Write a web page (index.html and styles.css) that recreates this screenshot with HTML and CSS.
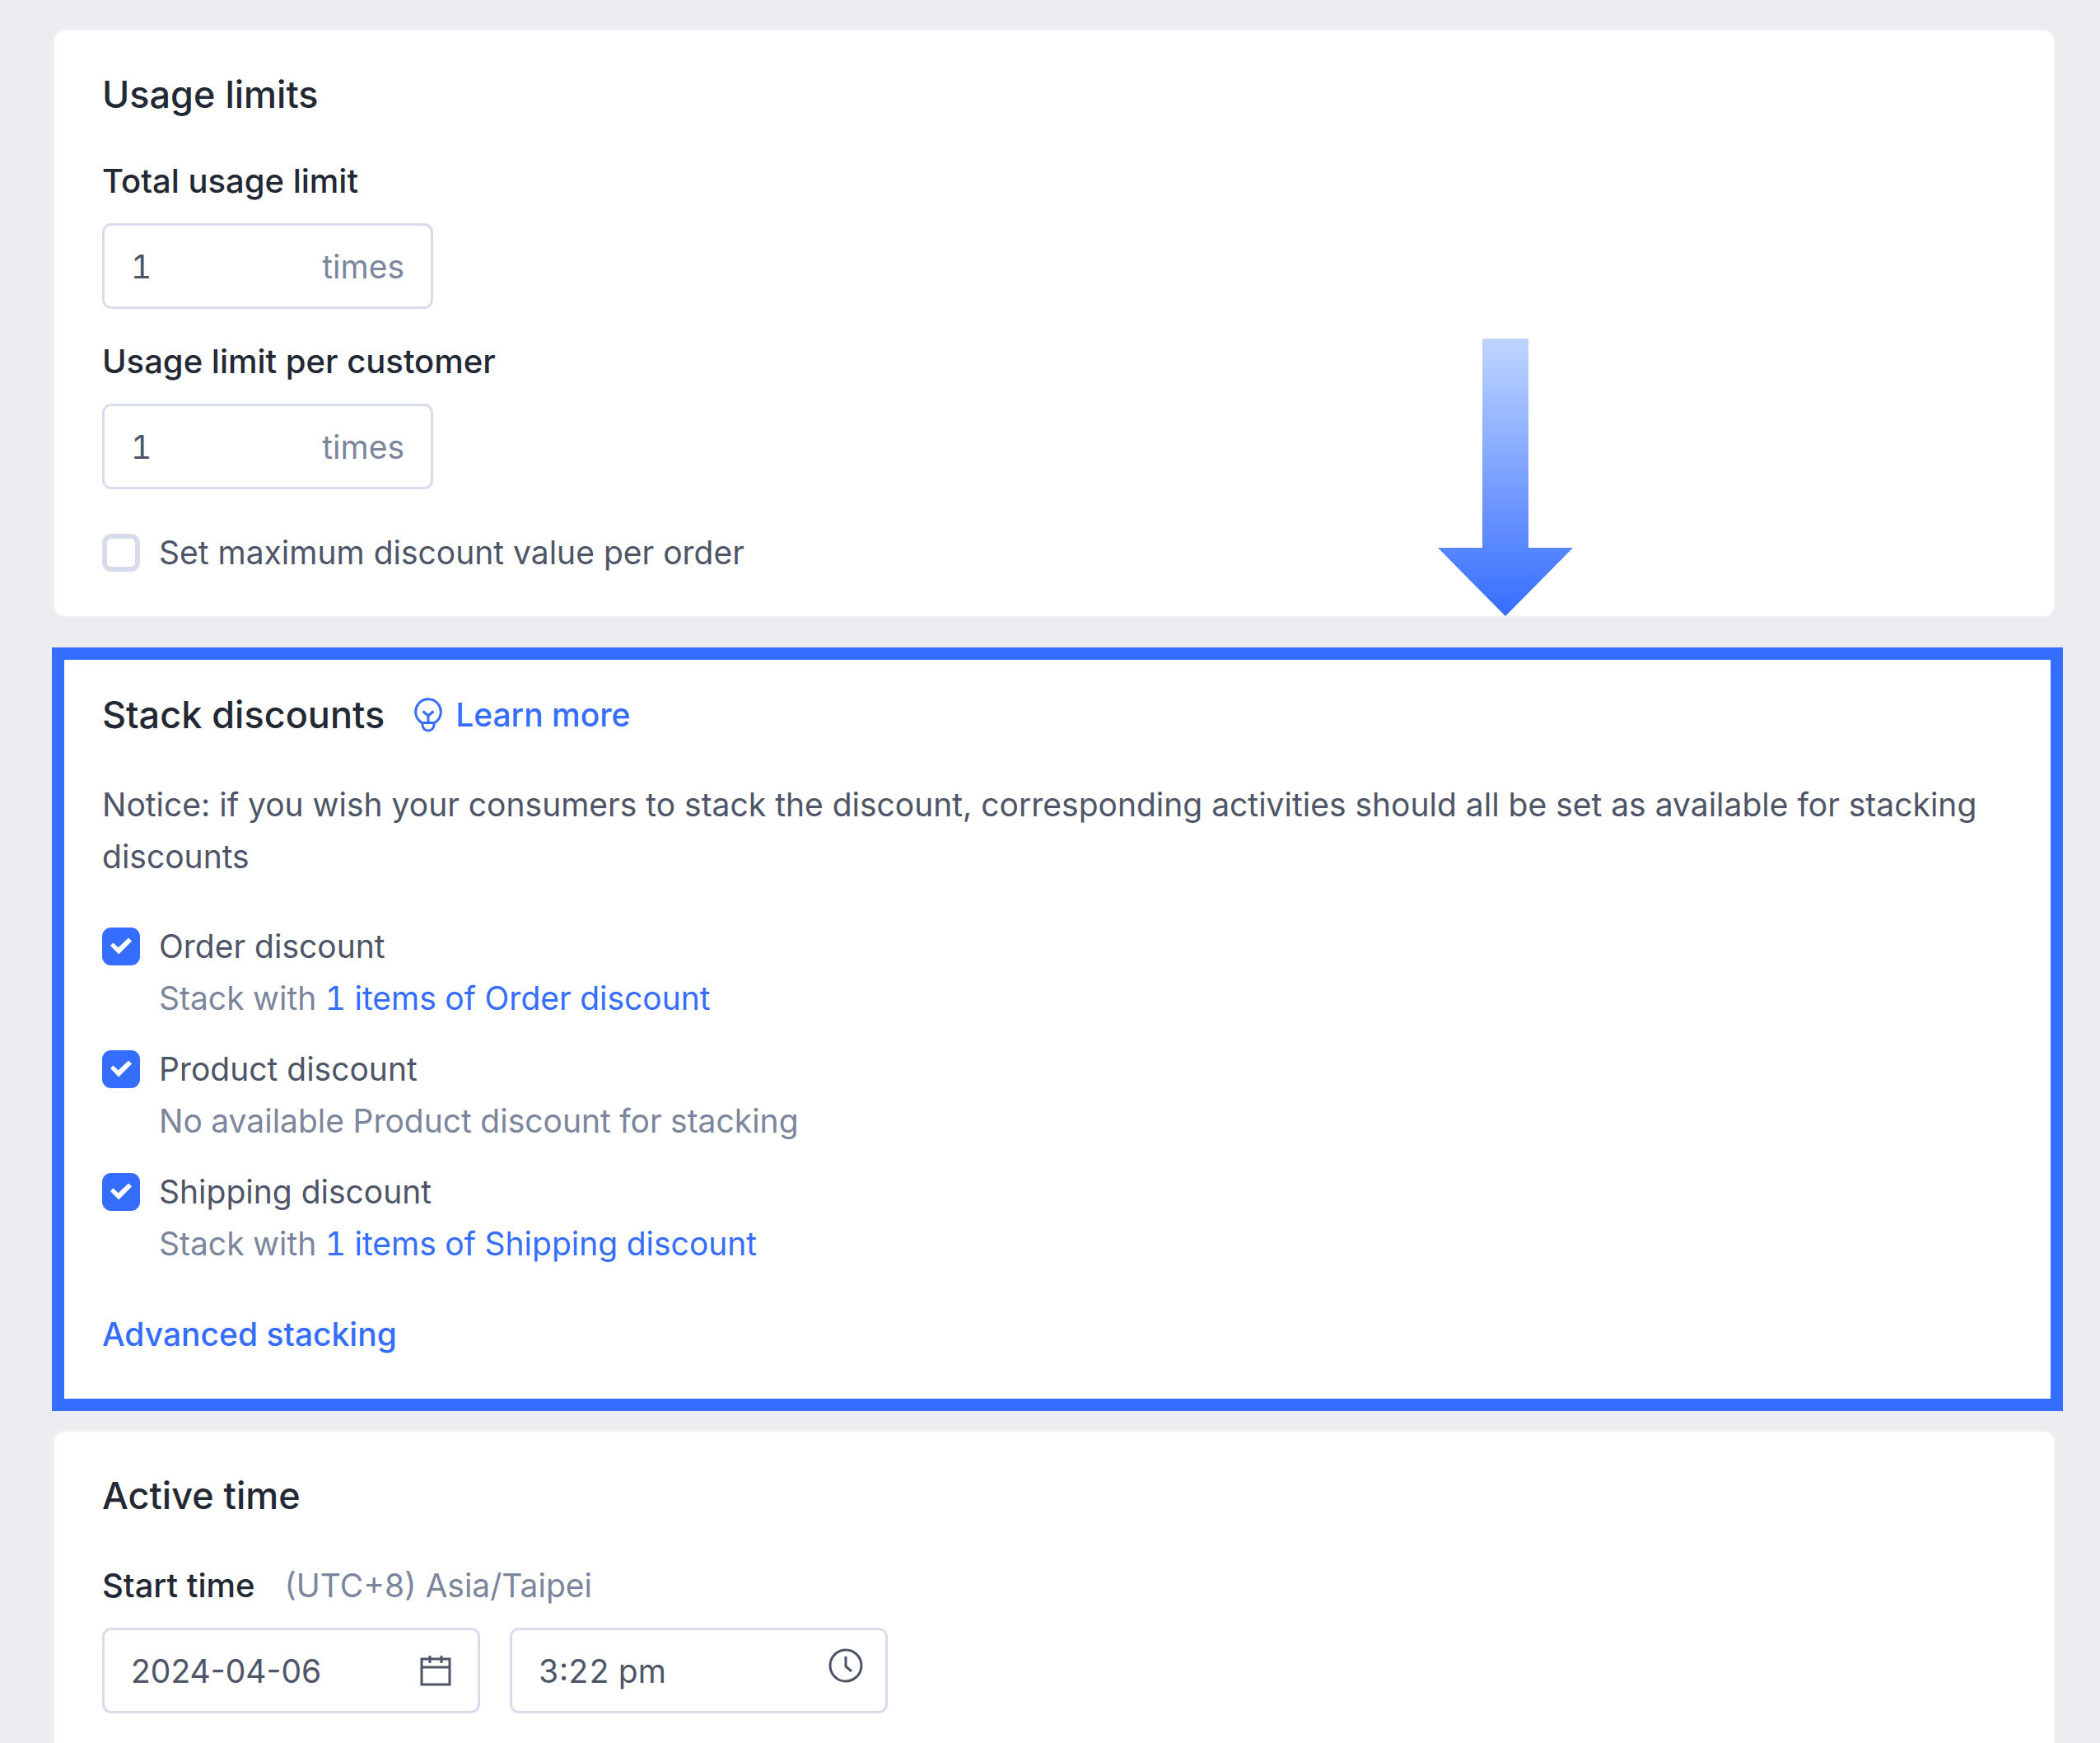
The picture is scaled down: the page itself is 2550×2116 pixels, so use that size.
FILE: index.html
```html
<!DOCTYPE html>
<html lang="en">
<head>
    <meta charset="UTF-8">
    <title>Discount settings</title>
    <link rel="stylesheet" href="styles.css">
</head>
<body>
    <main class="page">
        <section class="card limits">
            <h2>Usage limits</h2>
            <div class="field">
                <label class="field-label" for="total-limit">Total usage limit</label>
                <div class="input-box short">
                    <input type="text" id="total-limit" value="1">
                    <span class="suffix">times</span>
                </div>
            </div>
            <div class="field">
                <label class="field-label" for="customer-limit">Usage limit per customer</label>
                <div class="input-box short">
                    <input type="text" id="customer-limit" value="1">
                    <span class="suffix">times</span>
                </div>
            </div>
            <label class="check-row max-value">
                <input type="checkbox">
                Set maximum discount value per order
            </label>
            <svg class="arrow" viewBox="0 0 164 338" aria-hidden="true">
                <defs>
                    <linearGradient id="arrow-fill" x1="0" y1="0" x2="0" y2="1">
                        <stop offset="0" stop-color="#bfd5ff"/>
                        <stop offset="1" stop-color="#356dff"/>
                    </linearGradient>
                </defs>
                <path fill="url(#arrow-fill)" d="M54 1H110V255H164L82 338L0 255H54Z"/>
            </svg>
        </section>

        <section class="card stack">
            <div class="title-row">
                <h2>Stack discounts</h2>
                <a href="#" class="learn-more">
                    <svg viewBox="0 0 34 42" aria-hidden="true">
                        <path d="M9.500 30.500A15.300 15.300 0 1 1 24.500 30.500ZM10 30.500V33A7 7 0 0 0 24 33V30.500M10.500 16.500L17 22L23.500 16.500M17 22V30"/>
                    </svg>
                    Learn more
                </a>
            </div>
            <p class="notice">Notice: if you wish your consumers to stack the discount, corresponding activities should all be set as available for stacking discounts</p>
            <ul class="options">
                <li>
                    <label class="check-row"><input type="checkbox" checked>Order discount</label>
                    <p class="hint">Stack with <a href="#">1 items of Order discount</a></p>
                </li>
                <li>
                    <label class="check-row"><input type="checkbox" checked>Product discount</label>
                    <p class="hint">No available Product discount for stacking</p>
                </li>
                <li>
                    <label class="check-row"><input type="checkbox" checked>Shipping discount</label>
                    <p class="hint">Stack with <a href="#">1 items of Shipping discount</a></p>
                </li>
            </ul>
            <a href="#" class="advanced">Advanced stacking</a>
        </section>

        <section class="card active-time">
            <h2>Active time</h2>
            <div class="time-label">
                <label class="field-label" for="start-date">Start time</label>
                <span class="zone">(UTC+8) Asia/Taipei</span>
            </div>
            <div class="time-row">
                <div class="input-box date-box">
                    <input type="text" id="start-date" value="2024-04-06">
                    <svg class="calendar" viewBox="0 0 38 38" aria-hidden="true">
                        <path d="M2 5H36V36H2ZM2 15H36M12 1V10M26 1V10"/>
                    </svg>
                </div>
                <div class="input-box time-box">
                    <input type="text" aria-label="Start hour" value="3:22 pm">
                    <svg class="clock" viewBox="0 0 42 42" aria-hidden="true">
                        <path d="M21 2A19 19 0 1 1 21 40A19 19 0 1 1 21 2ZM21 10V22L28 28"/>
                    </svg>
                </div>
            </div>
        </section>
    </main>
</body>
</html>
```
FILE: styles.css
```css
* {
    box-sizing: border-box;
}
body {
    margin: 0;
    background: #ebecf0;
    color: #4d5566;
    font-family: Inter, "Liberation Sans", sans-serif;
    font-size: 39px;
    line-height: 63px;
    overflow: hidden;
}
h2, p, ul {
    margin: 0;
    padding: 0;
}
h2 {
    font-size: 45px;
    line-height: 63px;
    font-weight: 500;
    color: #232934;
}
a {
    color: #356dff;
    text-decoration: none;
}
.page {
    padding: 34px 45px 0 63px;
}
.card {
    background: #fff;
    margin-right: 8px;
    border: 3px solid #f0f0f0;
    border-radius: 16px;
    padding: 46px 58px;
}
.limits {
    position: relative;
}
.field {
    margin-top: 32px;
}
h2 + .field {
    margin-top: 42px;
}
.field-label {
    display: block;
    font-size: 40px;
    font-weight: 500;
    color: #232934;
}
.input-box {
    display: flex;
    align-items: center;
    width: 459px;
    height: 104px;
    margin-top: 20px;
    padding: 0 32px;
    border: 3px solid #d8dcea;
    border-radius: 11px;
}
.input-box.short {
    width: 402px;
}
.input-box input {
    flex: 1;
    min-width: 0;
    padding: 0;
    border: 0;
    outline: 0;
    background: none;
    font: inherit;
    font-variant-numeric: tabular-nums;
    color: inherit;
}
.date-box input {
    font-variant-numeric: normal;
}
.suffix, .hint, .zone {
    color: #7b869d;
}
.check-row {
    display: flex;
    align-items: center;
    gap: 23px;
}
.max-value {
    margin-top: 45px;
}
input[type="checkbox"] {
    appearance: none;
    width: 46px;
    height: 46px;
    margin: 0;
    border: 6px solid #d8dcea;
    border-radius: 11px;
}
input[type="checkbox"]:checked {
    border: 0;
    background: #356dff;
    display: grid;
    place-items: center;
}
input[type="checkbox"]:checked::before {
    content: "";
    width: 26px;
    height: 20px;
    background: #fff;
    clip-path: polygon(0 47%, 13% 30%, 37% 59%, 85% 0, 100% 20%, 39% 100%);
}
/* arrow pointing down at the stacking card */
.arrow {
    position: absolute;
    right: 584px;
    bottom: 0;
    width: 164px;
    height: 338px;
}
.stack {
    margin: 35px 0 22px;
    border: 15px solid #356dff;
    border-radius: 0;
    padding: 35px 46px 47px;
}
.title-row {
    display: flex;
    align-items: center;
    gap: 36px;
}
.learn-more {
    display: flex;
    align-items: center;
    gap: 16px;
    font-weight: 500;
}
svg {
    fill: none;
    stroke: currentColor;
    stroke-width: 3;
}
.arrow {
    stroke: none;
}
.learn-more svg {
    width: 34px;
    height: 42px;
}
.notice {
    margin: 46px 0;
}
.options {
    list-style: none;
    display: grid;
    gap: 23px;
    margin-bottom: 47px;
}
.hint {
    padding-left: 69px;
    font-variant-numeric: tabular-nums;
}
.advanced {
    display: block;
    font-weight: 500;
}
.active-time {
    border-bottom: 0;
    border-radius: 16px 16px 0 0;
}
.time-label {
    display: flex;
    gap: 36px;
    margin-top: 46px;
}
.time-row {
    display: flex;
    gap: 36px;
}
.calendar {
    width: 38px;
    height: 38px;
}
.time-box {
    padding-right: 27px;
}
/* clock sits a little above the text's middle line */
.clock {
    width: 42px;
    height: 42px;
    margin-bottom: 12px;
}
```
